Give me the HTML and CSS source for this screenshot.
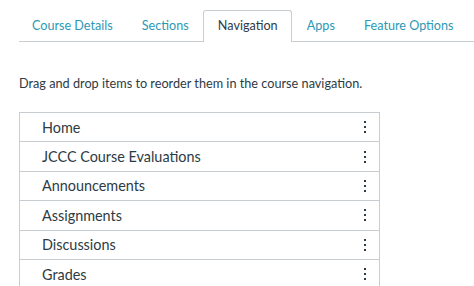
FILE: index.html
```html
<!DOCTYPE html>
<html>
<head>
<meta charset="utf-8">
<link rel="stylesheet" href="styles.css">
</head>
<body>
<div class="page">
  <ul class="tabs">
    <li class="tab"><a>Course Details</a></li>
    <li class="tab"><a>Sections</a></li>
    <li class="tab active"><a>Navigation</a></li>
    <li class="tab"><a>Apps</a></li>
    <li class="tab"><a>Feature Options</a></li>
  </ul>
  <p class="hint">Drag and drop items to reorder them in the course navigation.</p>
  <ul class="navlist">
    <li class="item"><span class="label">Home</span><span class="kebab"><i></i><i></i><i></i></span></li>
    <li class="item"><span class="label">JCCC Course Evaluations</span><span class="kebab"><i></i><i></i><i></i></span></li>
    <li class="item"><span class="label">Announcements</span><span class="kebab"><i></i><i></i><i></i></span></li>
    <li class="item"><span class="label">Assignments</span><span class="kebab"><i></i><i></i><i></i></span></li>
    <li class="item"><span class="label">Discussions</span><span class="kebab"><i></i><i></i><i></i></span></li>
    <li class="item"><span class="label">Grades</span><span class="kebab"><i></i><i></i><i></i></span></li>
  </ul>
</div>
</body>
</html>
```

FILE: styles.css
```css
html, body {
  margin: 0;
  padding: 0;
  background: #ffffff;
  overflow: hidden;
}
body {
  font-family: Lato, "Noto Sans", sans-serif;
  color: #2d3b45;
}
.page {
  padding: 10px 0 0 19px;
}
.tabs {
  list-style: none;
  margin: 0;
  padding: 0;
  display: flex;
  border-bottom: 1px solid #c7cdd1;
  height: 31px;
}
.tab {
  box-sizing: border-box;
  height: 32px;
  padding: 0 13.6px 2px 13.6px;
  border: 1px solid transparent;
  border-bottom: none;
  display: flex;
  align-items: center;
  white-space: nowrap;
  font-size: 12.6px;
  color: #2d99b5;
}
.tab:first-child {
  padding-left: 12px;
}
.tab.active {
  background: #fff;
  border-color: #c7cdd1;
  border-radius: 3px 3px 0 0;
  color: #2d3b45;
}
.hint {
  margin: 31px 0 0 0;
  font-size: 12.7px;
  line-height: 20px;
}
.navlist {
  list-style: none;
  margin: 19px 0 0 0;
  padding: 0;
  width: 361px;
  box-sizing: border-box;
  border: 1px solid #c7cdd1;
  border-bottom: none;
}
.item {
  box-sizing: border-box;
  height: 29.4px;
  border-bottom: 1px solid #c7cdd1;
  display: flex;
  align-items: center;
  justify-content: space-between;
  padding: 0 13px 0 22px;
  font-size: 14.4px;
}
.kebab {
  display: flex;
  flex-direction: column;
  gap: 3px;
}
.kebab i {
  display: block;
  width: 2px;
  height: 2px;
  background: #2d3b45;
}
```
